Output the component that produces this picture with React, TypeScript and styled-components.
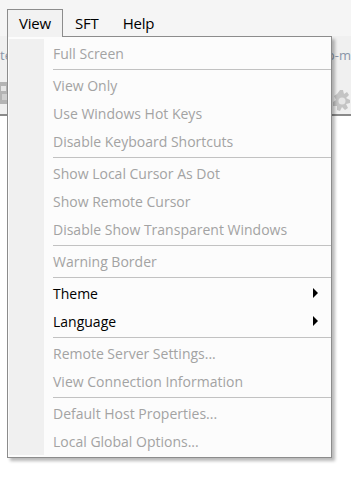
import styled, { createGlobalStyle } from "styled-components";

type MenuEntry =
  | { kind: "item"; label: string; enabled?: boolean; submenu?: boolean }
  | { kind: "separator" };

const VIEW_MENU: MenuEntry[] = [
  { kind: "item", label: "Full Screen" },
  { kind: "separator" },
  { kind: "item", label: "View Only" },
  { kind: "item", label: "Use Windows Hot Keys" },
  { kind: "item", label: "Disable Keyboard Shortcuts" },
  { kind: "separator" },
  { kind: "item", label: "Show Local Cursor As Dot" },
  { kind: "item", label: "Show Remote Cursor" },
  { kind: "item", label: "Disable Show Transparent Windows" },
  { kind: "separator" },
  { kind: "item", label: "Warning Border" },
  { kind: "separator" },
  { kind: "item", label: "Theme", enabled: true, submenu: true },
  { kind: "item", label: "Language", enabled: true, submenu: true },
  { kind: "separator" },
  { kind: "item", label: "Remote Server Settings..." },
  { kind: "item", label: "View Connection Information" },
  { kind: "separator" },
  { kind: "item", label: "Default Host Properties..." },
  { kind: "item", label: "Local Global Options..." },
];

const GlobalStyle = createGlobalStyle`
  html, body {
    margin: 0;
    padding: 0;
    background: #ffffff;
  }
  body {
    font-family: "Open Sans", "Noto Sans", sans-serif;
    font-size: 14px;
    color: #000000;
  }
`;

const App = () => {
  return (
    <>
      <GlobalStyle />
      <Window>
        <MenuBar>
          <TopMenu $open>View</TopMenu>
          <TopMenu>SFT</TopMenu>
          <TopMenu>Help</TopMenu>
        </MenuBar>
        <Toolbar>
          <TitleRow>
            <TitleText>te</TitleText>
            <TitleText>p-m</TitleText>
          </TitleRow>
          <IconRow>
            <ToolIcon width="10" height="22" viewBox="0 0 10 22">
              <rect x="0" y="0" width="8" height="22" fill="#b4b4b4" />
              <rect x="1" y="4" width="5" height="5" fill="#e6e6e6" />
              <rect x="2" y="12" width="5" height="6" fill="#d0d0d0" />
            </ToolIcon>
            <ToolIcon width="20" height="22" viewBox="0 0 20 22">
              <path
                d="M9 0 L12 0 L13 4 L16 2 L18 5 L15 8 L19 10 L19 13 L15 14 L17 18 L14 20 L11 17 L9 21 L6 20 L6 16 L2 16 L2 12 L5 10 L3 6 L6 4 Z"
                fill="#c4c4c4"
              />
              <circle cx="11" cy="11" r="3.5" fill="#e6e6e6" />
            </ToolIcon>
          </IconRow>
        </Toolbar>
        <Content />

        <DropDown>
          <Gutter />
          <Entries>
            {VIEW_MENU.map((entry, index) =>
              entry.kind === "separator" ? (
                <Separator key={index} />
              ) : (
                <Item key={index} $enabled={!!entry.enabled}>
                  <span>{entry.label}</span>
                  {entry.submenu && <SubArrow />}
                </Item>
              )
            )}
          </Entries>
        </DropDown>
      </Window>
    </>
  );
};

export default App;

const Window = styled.div`
  position: relative;
  width: 351px;
  height: 482px;
  overflow: hidden;
  display: flex;
  flex-direction: column;
  background: #ffffff;
`;

const MenuBar = styled.div`
  height: 36px;
  box-sizing: border-box;
  display: flex;
  align-items: flex-end;
  padding-left: 7px;
  background: #f5f5f5;
`;

const TopMenu = styled.div<{ $open?: boolean }>`
  position: relative;
  z-index: 2;
  box-sizing: border-box;
  padding: 0 11px;
  line-height: 26px;
  font-size: 15px;
  letter-spacing: -0.2px;
  color: #000000;
  border: 1px solid ${({ $open }) => ($open ? "#8c8c8c" : "transparent")};
  border-bottom: none;
  background: ${({ $open }) => ($open ? "#f2f2f2" : "transparent")};
  margin-bottom: ${({ $open }) => ($open ? "-1px" : "0")};
  height: ${({ $open }) => ($open ? "28px" : "27px")};
`;

const Toolbar = styled.div`
  height: 80px;
  box-sizing: border-box;
  background: #f0f0f0;
  border-bottom: 2px solid #8a8a8a;
  display: flex;
  flex-direction: column;
`;

const TitleRow = styled.div`
  display: flex;
  justify-content: space-between;
  padding-top: 10px;
  height: 30px;
  white-space: nowrap;
`;

const TitleText = styled.span`
  font-size: 13px;
  color: #8a96a8;
`;

const IconRow = styled.div`
  display: flex;
  justify-content: space-between;
  align-items: flex-start;
  padding-top: 6px;
`;

const ToolIcon = styled.svg`
  display: block;
  &:last-child {
    margin-top: 8px;
  }
`;

const Content = styled.div`
  flex: 1;
  background: #ffffff;
`;

const DropDown = styled.div`
  position: absolute;
  z-index: 1;
  top: 36px;
  left: 7px;
  width: 325px;
  box-sizing: border-box;
  display: flex;
  padding: 2px 0 2px 1px;
  background: #fcfcfc;
  border: 1px solid #8c8c8c;
  box-shadow: 3px 3px 3px rgba(0, 0, 0, 0.28);
`;

const Gutter = styled.div`
  width: 35px;
  flex-shrink: 0;
  background: #f0f0f0;
`;

const Entries = styled.div`
  flex: 1;
  display: flex;
  flex-direction: column;
`;

const Item = styled.div<{ $enabled: boolean }>`
  height: 28px;
  display: flex;
  align-items: center;
  justify-content: space-between;
  padding: 0 13px 0 9px;
  font-size: 14px;
  white-space: nowrap;
  color: ${({ $enabled }) => ($enabled ? "#000000" : "#a3a3a3")};
`;

const Separator = styled.div`
  height: 1px;
  margin: 2px 0 1px 9px;
  background: #c2c2c2;
`;

const SubArrow = styled.span`
  width: 0;
  height: 0;
  border-top: 5px solid transparent;
  border-bottom: 5px solid transparent;
  border-left: 5px solid #000000;
`;
